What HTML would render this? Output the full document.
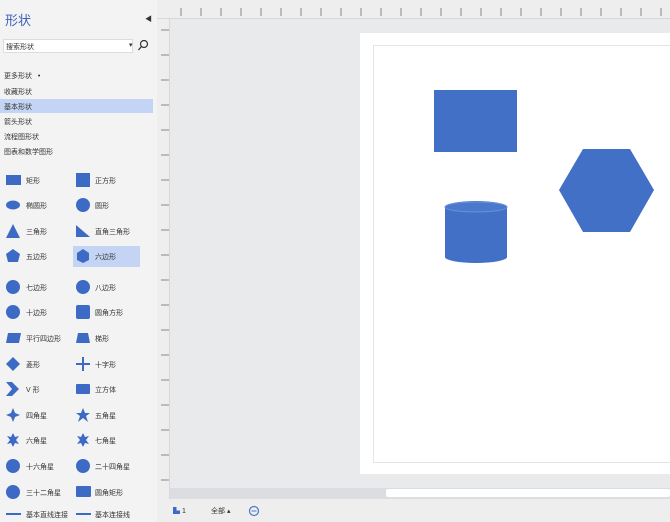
<!DOCTYPE html><html><head><meta charset="utf-8"><style>
*{margin:0;padding:0;box-sizing:border-box}
body{width:670px;height:522px;overflow:hidden;background:#e9eaec;font-family:"Liberation Sans","Noto Sans CJK SC",sans-serif;position:relative}
.a{position:absolute}
.t{font-size:7px;color:#333;white-space:nowrap}
</style></head><body>
<div class="a" style="left:0;top:0;width:157px;height:522px;background:#f3f3f3"></div>
<div class="a" style="left:5px;top:10px;font-size:13px;color:#3b62b8">形状</div>
<div class="a" style="left:145px;top:14px;font-size:7px;color:#333">◀</div>
<div class="a" style="left:3px;top:39px;width:130px;height:14px;background:#fff;border:1px solid #ddd"></div>
<div class="a t" style="left:6px;top:42px">搜索形状</div>
<div class="a t" style="left:129px;top:41px">▾</div>
<svg class="a" style="left:137px;top:39px" width="12" height="13"><circle cx="7" cy="5" r="3.5" fill="none" stroke="#333" stroke-width="1.2"/><line x1="4.5" y1="7.5" x2="1.5" y2="11" stroke="#333" stroke-width="1.3"/></svg>
<div class="a" style="left:0;top:99px;width:153px;height:14px;background:#c4d4f4"></div>
<div class="a t" style="left:4px;top:71px">更多形状 &nbsp; •</div>
<div class="a t" style="left:4px;top:87px">收藏形状</div>
<div class="a t" style="left:4px;top:102px">基本形状</div>
<div class="a t" style="left:4px;top:117px">箭头形状</div>
<div class="a t" style="left:4px;top:132px">流程图形状</div>
<div class="a t" style="left:4px;top:147px">图表和数学图形</div>
<div class="a" style="left:73px;top:246px;width:67px;height:21px;background:#c4d4f4"></div>
<svg class="a" style="left:0;top:165px" width="157" height="357" fill="#3d6ac4">
<!-- row y centers (relative): 15,40,66,91,122,147,173,199,224,250,275,301,327,349 -->
<rect x="6" y="10" width="15" height="10"/><rect x="76" y="8" width="14" height="14"/>
<ellipse cx="13" cy="40" rx="7" ry="4.5"/><circle cx="83" cy="40" r="7"/>
<polygon points="6,73 13,59 20,73"/><polygon points="76,60 76,72 90,72"/>
<polygon points="13,84 20,89 18,97 8,97 6,89"/><polygon points="83,84 89,88 89,95 83,98 77,95 77,88"/>
<circle cx="13" cy="122" r="7"/><circle cx="83" cy="122" r="7"/>
<circle cx="13" cy="147" r="7"/><rect x="76" y="140" width="14" height="14" rx="2"/>
<polygon points="8,168 21,168 19,178 6,178"/><polygon points="78,168 88,168 90,178 76,178"/>
<polygon points="13,192 20,199 13,206 6,199"/><rect x="82" y="192" width="2" height="14"/><rect x="76" y="198" width="14" height="2"/>
<polygon points="6,217 12,217 19,224 12,231 6,231 12,224"/><rect x="76" y="219" width="14" height="10" rx="1"/>
<polygon points="13,243 15,248 20,250 15,252 13,257 11,252 6,250 11,248"/><polygon points="83,243 85,248 90,248 86,251 88,257 83,253 78,257 80,251 76,248 81,248"/>
<polygon points="13,268 15,272 19,271 16,275 19,279 15,278 13,282 11,278 7,279 10,275 7,271 11,272"/><polygon points="83,268 85,272 89,271 86,275 89,279 85,278 83,282 81,278 77,279 80,275 77,271 81,272"/>
<circle cx="13" cy="301" r="7"/><circle cx="83" cy="301" r="7"/>
<circle cx="13" cy="327" r="7"/><rect x="76" y="321" width="15" height="11" rx="1"/>
<rect x="6" y="348" width="15" height="2"/><rect x="76" y="348" width="15" height="2"/>
</svg>
<div class="a t" style="left:26px;top:176px">矩形</div><div class="a t" style="left:95px;top:176px">正方形</div>
<div class="a t" style="left:26px;top:201px">椭圆形</div><div class="a t" style="left:95px;top:201px">圆形</div>
<div class="a t" style="left:26px;top:227px">三角形</div><div class="a t" style="left:95px;top:227px">直角三角形</div>
<div class="a t" style="left:26px;top:252px">五边形</div><div class="a t" style="left:95px;top:252px">六边形</div>
<div class="a t" style="left:26px;top:283px">七边形</div><div class="a t" style="left:95px;top:283px">八边形</div>
<div class="a t" style="left:26px;top:308px">十边形</div><div class="a t" style="left:95px;top:308px">圆角方形</div>
<div class="a t" style="left:26px;top:334px">平行四边形</div><div class="a t" style="left:95px;top:334px">梯形</div>
<div class="a t" style="left:26px;top:360px">菱形</div><div class="a t" style="left:95px;top:360px">十字形</div>
<div class="a t" style="left:26px;top:385px">V 形</div><div class="a t" style="left:95px;top:385px">立方体</div>
<div class="a t" style="left:26px;top:411px">四角星</div><div class="a t" style="left:95px;top:411px">五角星</div>
<div class="a t" style="left:26px;top:436px">六角星</div><div class="a t" style="left:95px;top:436px">七角星</div>
<div class="a t" style="left:26px;top:462px">十六角星</div><div class="a t" style="left:95px;top:462px">二十四角星</div>
<div class="a t" style="left:26px;top:488px">三十二角星</div><div class="a t" style="left:95px;top:488px">圆角矩形</div>
<div class="a t" style="left:26px;top:510px">基本直线连接</div><div class="a t" style="left:95px;top:510px">基本连接线</div>
<!-- rulers -->
<div class="a" style="left:157px;top:0;width:513px;height:19px;background:#eeeeef;border-bottom:1px solid #d8d8d8"></div>
<div class="a" style="left:157px;top:19px;width:13px;height:480px;background:#eeeeef;border-right:1px solid #d8d8d8"></div>
<svg class="a" style="left:157px;top:0" width="513" height="499" stroke="#888" stroke-width="1">
<g id="h"></g>
<path d="M24 8v8M44 8v8M64 8v8M84 8v8M104 8v8M124 8v8M144 8v8M164 8v8M184 8v8M204 8v8M224 8v8M244 8v8M264 8v8M284 8v8M304 8v8M324 8v8M344 8v8M364 8v8M384 8v8M404 8v8M424 8v8M444 8v8M464 8v8M484 8v8M504 8v8"/>
<path d="M4 30h8M4 55h8M4 80h8M4 105h8M4 130h8M4 155h8M4 180h8M4 205h8M4 230h8M4 255h8M4 280h8M4 305h8M4 330h8M4 355h8M4 380h8M4 405h8M4 430h8M4 455h8M4 480h8"/>
</svg>
<!-- page -->
<div class="a" style="left:360px;top:33px;width:310px;height:441px;background:#fff"></div>
<div class="a" style="left:373px;top:45px;width:297px;height:418px;border:1px solid #e2e4e8;border-right:none"></div>
<svg class="a" style="left:0;top:0" width="670" height="522">
<rect x="434" y="90" width="83" height="62" fill="#4270c6"/>
<polygon points="559,190 583,149 630,149 654,190 630,232 583,232" fill="#4270c6"/>
<path d="M445 207 v50 a31 6 0 0 0 62 0 v-50 a31 6 0 0 0 -62 0z" fill="#4270c6"/>
<ellipse cx="476" cy="207" rx="31" ry="5" fill="#4a78cc" stroke="#6b91d6" stroke-width="1"/>
</svg>
<!-- scrollbar -->
<div class="a" style="left:170px;top:488px;width:500px;height:11px;background:#dcdde0"></div>
<div class="a" style="left:386px;top:489px;width:284px;height:8px;background:#fff;border-radius:2px"></div>
<div class="a" style="left:157px;top:499px;width:513px;height:23px;background:#eeeeef"></div>
<div class="a t" style="left:173px;top:506px;color:#3d6ac4">▙ <span style="color:#333">1</span></div>
<div class="a t" style="left:211px;top:506px">全部 ▴</div>
<svg class="a" style="left:248px;top:505px" width="12" height="12"><circle cx="6" cy="6" r="4.5" fill="none" stroke="#4a78cc" stroke-width="1.2"/><line x1="3.5" y1="6" x2="8.5" y2="6" stroke="#4a78cc"/></svg>
</body></html>
